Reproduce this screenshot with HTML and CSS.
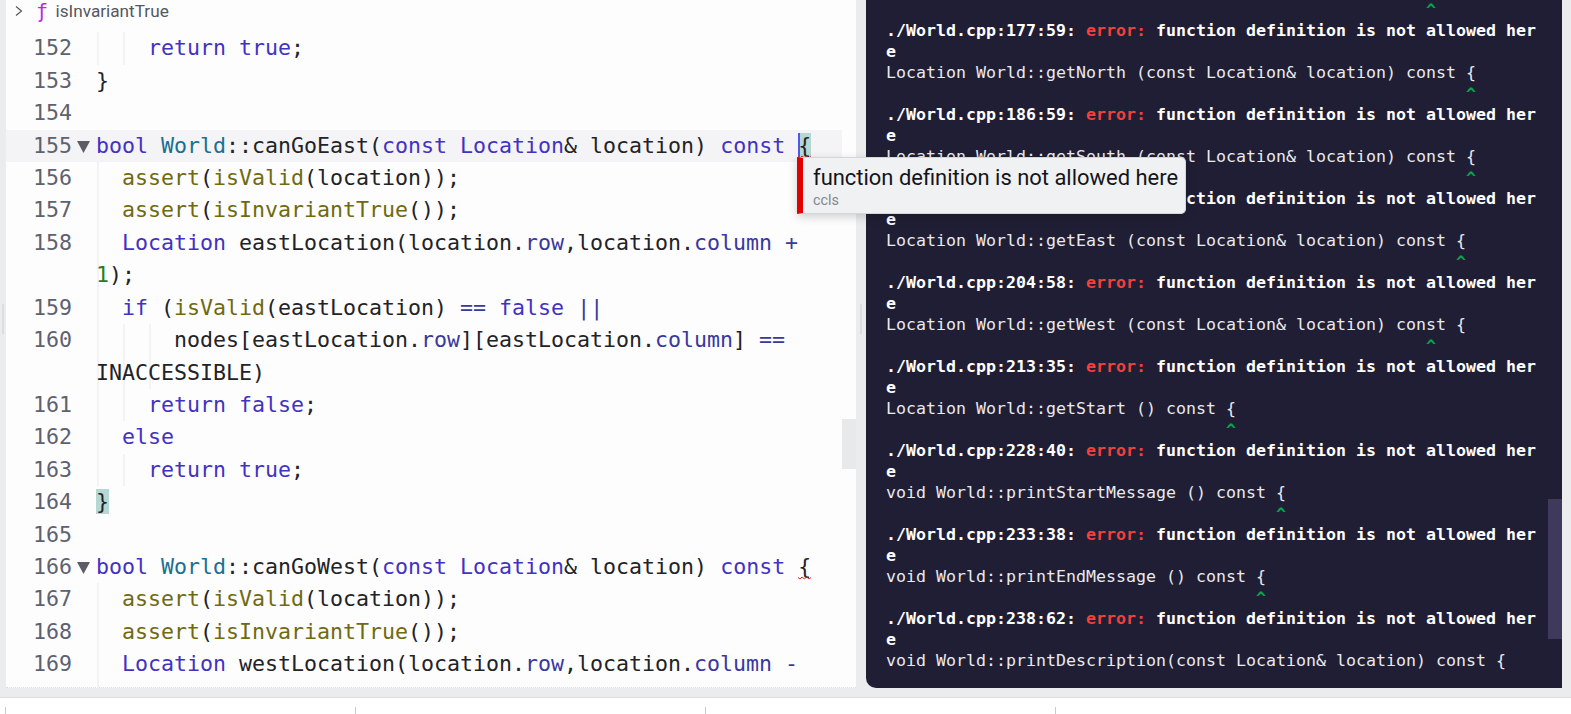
FILE: index.html
```html
<!DOCTYPE html>
<html lang="en">
<head>
<meta charset="utf-8">
<title>World.cpp</title>
<link rel="stylesheet" href="styles.css">
</head>
<body>
<div class="app">
  <div class="panes">
    <div class="edge"><i class="handle"></i></div>
    <section class="editor">
      <nav class="crumb">
        <svg class="chev" viewBox="0 0 10 12" width="10" height="12"><path d="M2 1.5 7.5 6 2 10.5" fill="none" stroke="#55585f" stroke-width="1.2"/></svg>
        <span class="fn">ƒ</span>
        <span class="crumb-name">isInvariantTrue</span>
      </nav>
      <div class="code">
        <div class="row"><span class="num">152</span><span class="fold"></span><pre class="src g1 g2">    <b class="k">return</b> <b class="k">true</b>;</pre></div>
        <div class="row"><span class="num">153</span><span class="fold"></span><pre class="src">}</pre></div>
        <div class="row"><span class="num">154</span><span class="fold"></span><pre class="src"> </pre></div>
        <div class="row active"><span class="num">155</span><span class="fold"><svg viewBox="0 0 13 13" width="13" height="13"><path d="M0 1h13L6.5 13z" fill="#5b5c66"/></svg></span><pre class="src"><b class="k">bool</b> <b class="t">World</b>::canGoEast(<b class="k">const</b> <b class="k">Location</b>&amp; location) <b class="k">const</b> <span class="brace squig">{<svg class="wave" viewBox="0 0 13 4" width="13" height="4"><path d="M0 1.5 2 3l2-2 2.500 2 2-2 2.500 2 2-1.500" fill="none" stroke="#d92b2b"/></svg></span></pre></div>
        <div class="row"><span class="num">156</span><span class="fold"></span><pre class="src g1">  <b class="f">assert</b>(<b class="f">isValid</b>(location));</pre></div>
        <div class="row"><span class="num">157</span><span class="fold"></span><pre class="src g1">  <b class="f">assert</b>(<b class="f">isInvariantTrue</b>());</pre></div>
        <div class="row"><span class="num">158</span><span class="fold"></span><pre class="src g1">  <b class="k">Location</b> eastLocation(location.<b class="p">row</b>,location.<b class="p">column</b> <b class="p">+</b>
<b class="n">1</b>);</pre></div>
        <div class="row"><span class="num">159</span><span class="fold"></span><pre class="src g1">  <b class="k">if</b> (<b class="f">isValid</b>(eastLocation) <b class="p">==</b> <b class="k">false</b> <b class="p">||</b></pre></div>
        <div class="row"><span class="num">160</span><span class="fold"></span><pre class="src g1 g2 g3">      nodes[eastLocation.<b class="p">row</b>][eastLocation.<b class="p">column</b>] <b class="p">==</b>
INACCESSIBLE)</pre></div>
        <div class="row"><span class="num">161</span><span class="fold"></span><pre class="src g1 g2">    <b class="k">return</b> <b class="k">false</b>;</pre></div>
        <div class="row"><span class="num">162</span><span class="fold"></span><pre class="src g1">  <b class="k">else</b></pre></div>
        <div class="row"><span class="num">163</span><span class="fold"></span><pre class="src g1 g2">    <b class="k">return</b> <b class="k">true</b>;</pre></div>
        <div class="row"><span class="num">164</span><span class="fold"></span><pre class="src"><span class="match">}</span></pre></div>
        <div class="row"><span class="num">165</span><span class="fold"></span><pre class="src"> </pre></div>
        <div class="row"><span class="num">166</span><span class="fold"><svg viewBox="0 0 13 13" width="13" height="13"><path d="M0 1h13L6.5 13z" fill="#5b5c66"/></svg></span><pre class="src"><b class="k">bool</b> <b class="t">World</b>::canGoWest(<b class="k">const</b> <b class="k">Location</b>&amp; location) <b class="k">const</b> <span class="squig">{<svg class="wave" viewBox="0 0 13 4" width="13" height="4"><path d="M0 1.5 2 3l2-2 2.500 2 2-2 2.500 2 2-1.500" fill="none" stroke="#d92b2b"/></svg></span></pre></div>
        <div class="row"><span class="num">167</span><span class="fold"></span><pre class="src g1">  <b class="f">assert</b>(<b class="f">isValid</b>(location));</pre></div>
        <div class="row"><span class="num">168</span><span class="fold"></span><pre class="src g1">  <b class="f">assert</b>(<b class="f">isInvariantTrue</b>());</pre></div>
        <div class="row"><span class="num">169</span><span class="fold"></span><pre class="src g1">  <b class="k">Location</b> westLocation(location.<b class="p">row</b>,location.<b class="p">column</b> <b class="p">-</b>
<b class="n">1</b>);</pre></div>
      </div>
      <div class="thumb"></div>
      <div class="tip">
        <div class="tip-msg">function definition is not allowed here</div>
        <div class="tip-src">ccls</div>
      </div>
    </section>
    <div class="split"><i class="handle"></i></div>
    <section class="term">
<pre class="log"><span class="c">                                                      ^</span>
<strong>./World.cpp:177:59: <em>error:</em> function definition is not allowed her
e</strong>
Location World::getNorth (const Location&amp; location) const {
<span class="c">                                                          ^</span>
<strong>./World.cpp:186:59: <em>error:</em> function definition is not allowed her
e</strong>
Location World::getSouth (const Location&amp; location) const {
<span class="c">                                                          ^</span>
<strong>./World.cpp:195:58: <em>error:</em> function definition is not allowed her
e</strong>
Location World::getEast (const Location&amp; location) const {
<span class="c">                                                         ^</span>
<strong>./World.cpp:204:58: <em>error:</em> function definition is not allowed her
e</strong>
Location World::getWest (const Location&amp; location) const {
<span class="c">                                                      ^</span>
<strong>./World.cpp:213:35: <em>error:</em> function definition is not allowed her
e</strong>
Location World::getStart () const {
<span class="c">                                  ^</span>
<strong>./World.cpp:228:40: <em>error:</em> function definition is not allowed her
e</strong>
void World::printStartMessage () const {
<span class="c">                                       ^</span>
<strong>./World.cpp:233:38: <em>error:</em> function definition is not allowed her
e</strong>
void World::printEndMessage () const {
<span class="c">                                     ^</span>
<strong>./World.cpp:238:62: <em>error:</em> function definition is not allowed her
e</strong>
void World::printDescription(const Location&amp; location) const {</pre>
      <div class="term-thumb"></div>
    </section>
    <div class="edge-r"></div>
  </div>
  <footer class="foot">
    <span class="cell"></span><span class="cell"></span><span class="cell"></span><span class="cell"></span>
  </footer>
</div>
</body>
</html>
```
FILE: styles.css
```css
* { box-sizing: border-box; }
html, body { margin: 0; height: 100%; overflow: hidden; }
body { background: #ebecee; font-family: "Roboto", sans-serif; }

.app { width: 1571px; height: 714px; display: flex; flex-direction: column; overflow: hidden; }
.panes { height: 688px; display: flex; flex: none; }

.edge { width: 6px; display: flex; align-items: center; flex: none; padding-left: 2px; }
.split { width: 10px; display: flex; align-items: center; justify-content: center; flex: none; }
.edge-r { flex: 1; }
.handle { display: block; width: 2px; height: 30px; background: #dcdde0; margin-top: -50px; }

.editor { position: relative; z-index: 1; width: 850px; flex: none; background: #fdfdfe; border-bottom: 1px dotted #dcdde0; }
.crumb { height: 22px; display: flex; align-items: center; padding-left: 8px; color: #55585f; font-size: 17.2px; }
.chev { margin-right: 12px; flex: none; }
.fn { width: 19.5px; color: #c020f5; font-family: "DejaVu Sans Mono", monospace; font-size: 20px; line-height: 22px; flex: none; }

.code { padding-top: 10.45px; width: 836px; overflow: hidden; height: 666px; }
.row { display: flex; font: 21.6px/32.4px "DejaVu Sans Mono", monospace; color: #222326; }
.row.active { background: #f4f4f6; }
.num { width: 66px; text-align: right; color: #5d6170; flex: none; }
.fold { width: 24px; flex: none; display: flex; justify-content: flex-end; padding: 10px 6px 0 0; }
.fold svg { display: block; }
.src { margin: 0; font: inherit; flex: 1; white-space: pre; --guide: #f3f3f5; }
.src b { font-weight: 400; }
.g1 { background: linear-gradient(var(--guide), var(--guide)) 1px 0 / 2px 100% no-repeat; }
.g1.g2 { background:
  linear-gradient(var(--guide), var(--guide)) 1px 0 / 2px 100% no-repeat,
  linear-gradient(var(--guide), var(--guide)) 27px 0 / 2px 100% no-repeat; }
.g1.g2.g3 { background:
  linear-gradient(var(--guide), var(--guide)) 1px 0 / 2px 100% no-repeat,
  linear-gradient(var(--guide), var(--guide)) 27px 0 / 2px 100% no-repeat,
  linear-gradient(var(--guide), var(--guide)) 53px 0 / 2px 100% no-repeat; }
.k { color: #4232c2; }
.t { color: #1c6f90; }
.f { color: #6f6a10; }
.p { color: #38389f; }
.n { color: #2c7d1e; }
.brace { background: #b5d8d3; box-shadow: inset 2px 0 0 #5555ee; }
.match { background: #b5d8d3; }
.squig { position: relative; }
.wave { position: absolute; left: 0; bottom: -1px; display: block; }

.thumb { position: absolute; right: 0; top: 419px; width: 14px; height: 50px; background: #e8e9eb; }

.tip { position: absolute; left: 791px; top: 157px; width: 389px; height: 57px; background: #f0f1f3; border: 1px solid #d5d6da; border-left: 6px solid #e30000; border-radius: 0 5px 5px 0; padding: 6px 0 0 10px; box-shadow: 0 3px 10px rgba(0,0,0,.18); white-space: nowrap; }
.tip-msg { font-size: 21.95px; line-height: 28px; color: #14151a; }
.tip-src { font-size: 14.4px; line-height: 17px; color: #85878d; }

.term { position: relative; width: 696px; flex: none; background: #201e34; border-radius: 0 0 0 10px; overflow: hidden; }
.log { margin: -1px 0 0; padding-left: 20px; font: 16.63px/21px "DejaVu Sans Mono", monospace; color: #e9e9ef; white-space: pre; }
.log strong { font-weight: 700; color: #fff; }
.log em { font-style: normal; color: #f0413f; }
.c { color: #00a84f; font-weight: 700; }
.term-thumb { position: absolute; right: 0; top: 499px; width: 14px; height: 140px; background: #3f3a5c; }

.foot { flex: 1; margin-top: 9px; background: #fff; border-top: 1px solid #dcdde0; display: grid; grid-template-columns: repeat(4, 350px); padding-left: 5px; padding-top: 9px; }
.cell { border-left: 1px solid #c9cacd; }
```
